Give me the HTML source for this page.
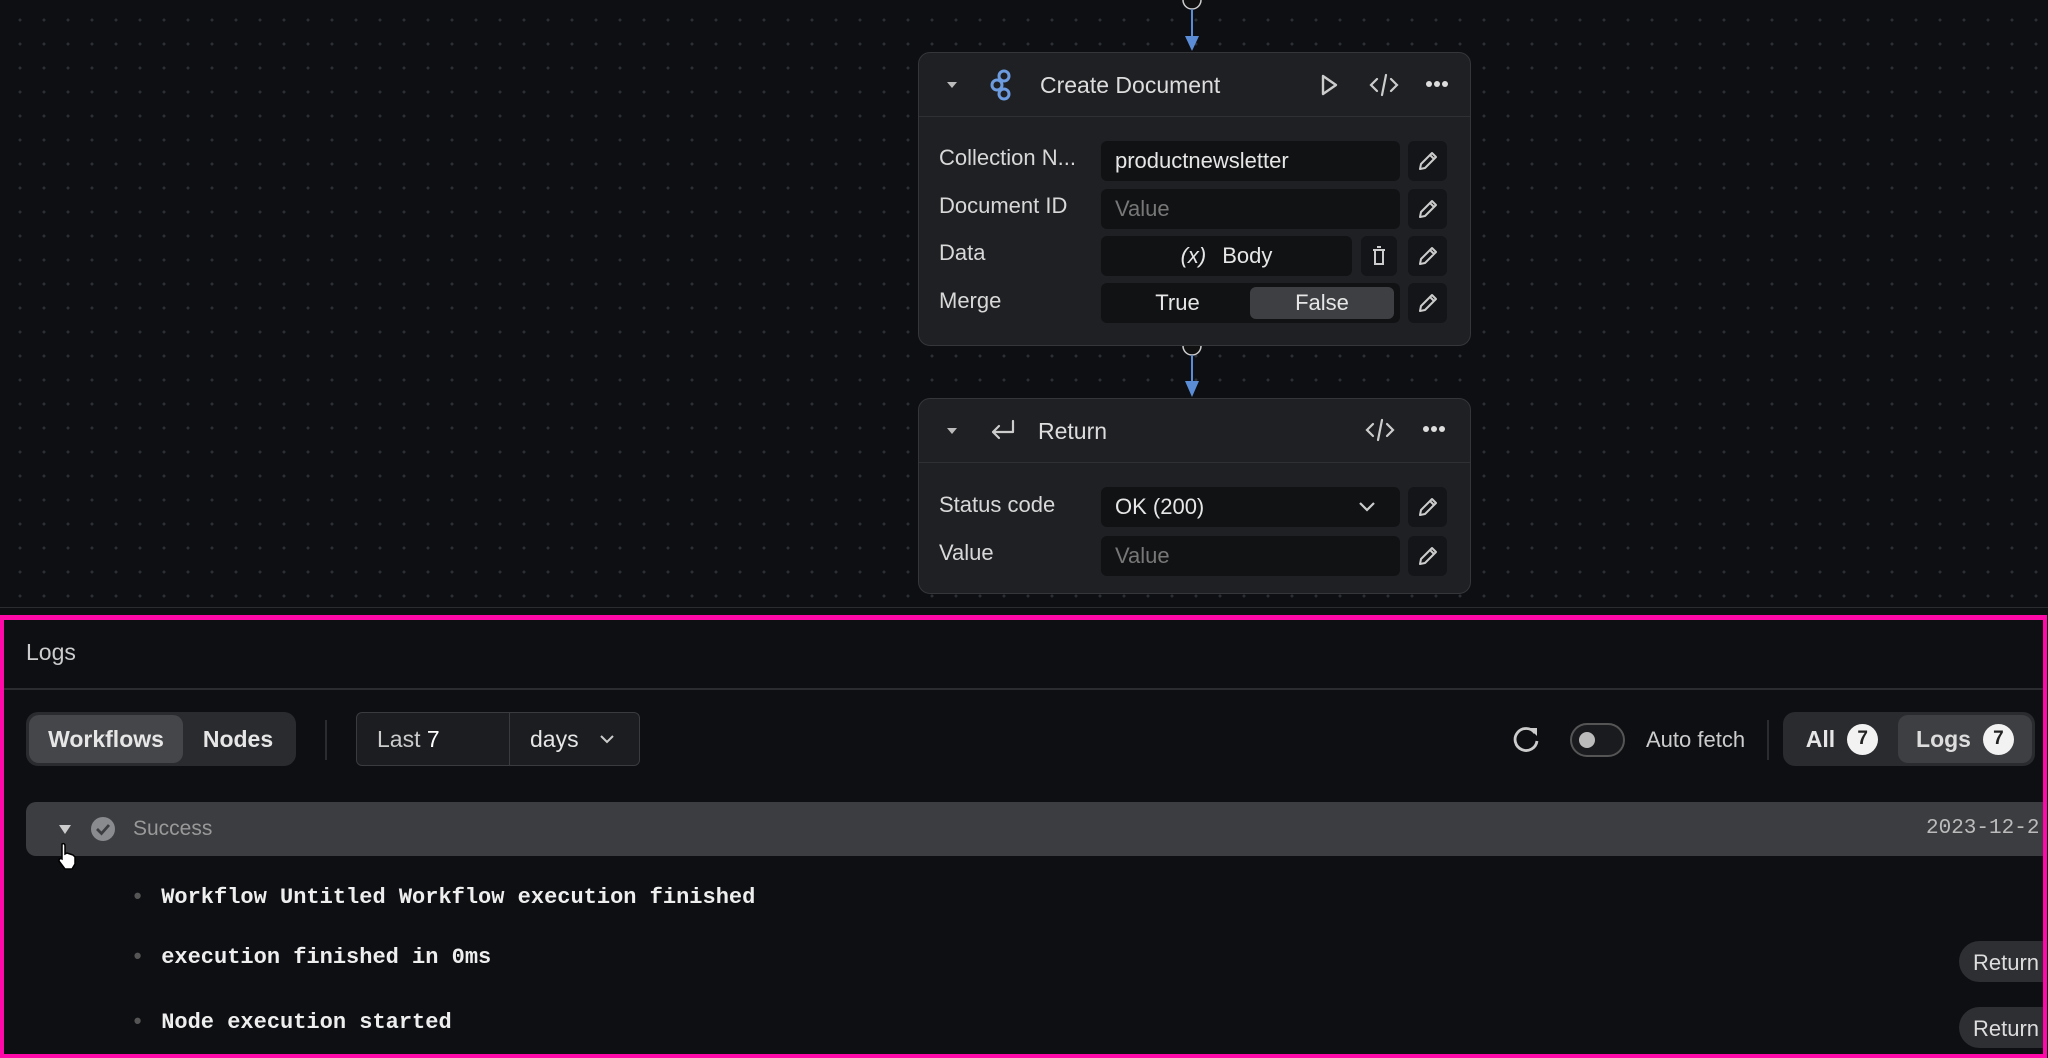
<!DOCTYPE html>
<html><head><meta charset="utf-8"><style>
*{box-sizing:border-box;margin:0;padding:0}
body{width:2048px;height:1058px;overflow:hidden;background:#0d0f13;font-family:"Liberation Sans",sans-serif;color:#e6e6e6;position:relative}
.grid{position:absolute;left:0;top:0;width:2048px;height:608px;background-image:radial-gradient(circle,#2c2f35 1.3px,transparent 1.6px);background-size:24px 24px;background-position:8px 8px}
.abs{position:absolute}
.card{position:absolute;left:918px;width:553px;background:#1f2023;border:1.5px solid #34363a;border-radius:12px}
.hdr{position:absolute;left:0;right:0;top:0;border-bottom:1.5px solid #2e3034}
.lbl{position:absolute;left:20px;font-size:22px;color:#d8d8d8}
.inp{position:absolute;left:182px;width:299px;background:#111214;border-radius:6px;font-size:22px;display:flex;align-items:center;padding-left:14px}
.ed{position:absolute;left:489px;width:39px;height:40px;background:#141518;border-radius:6px;display:flex;align-items:center;justify-content:center}
.mono{font-family:"Liberation Mono",monospace}
.pill{position:absolute;background:#2a2b2f;border-radius:12px}
.badge{display:inline-flex;width:31px;height:31px;border-radius:50%;background:#f2f2f2;color:#222;align-items:center;justify-content:center;font-size:19px;margin-left:12px}
</style></head><body>
<div class="grid"></div>
<svg class="abs" style="left:1176px;top:0" width="32" height="400">
<circle cx="16" cy="0" r="9" fill="#111" stroke="#ccc" stroke-width="1.5"/>
<line x1="16" y1="9" x2="16" y2="40" stroke="#5b8dd6" stroke-width="2"/>
<path d="M9 36 L23 36 L16 51 Z" fill="#5b8dd6"/>
<circle cx="16" cy="346" r="9" fill="#111" stroke="#ccc" stroke-width="1.5"/>
<line x1="16" y1="355" x2="16" y2="384" stroke="#5b8dd6" stroke-width="2"/>
<path d="M9 381 L23 381 L16 397 Z" fill="#5b8dd6"/>
</svg>
<!-- card 1 -->
<div class="card" style="top:52px;height:294px">
 <div class="hdr" style="height:64px"></div>
 <svg class="abs" style="left:26px;top:27px" width="14" height="10"><path d="M2 2 L12 2 L7 8Z" fill="#bbb"/></svg>
 <svg class="abs" style="left:70px;top:16px" width="26" height="32" fill="none" stroke="#6d9be0" stroke-width="3"><circle cx="15" cy="7" r="5"/><circle cx="8" cy="16" r="5"/><circle cx="15" cy="25" r="5"/></svg>
 <div class="abs" style="left:121px;top:19px;font-size:23px;color:#ddd">Create Document</div>
 <svg class="abs" style="left:400px;top:20px" width="20" height="24"><path d="M4 3 L17 12 L4 21Z" fill="none" stroke="#ccc" stroke-width="2.4" stroke-linejoin="round"/></svg>
 <svg class="abs" style="left:450px;top:18px" width="30" height="28" fill="none" stroke="#ccc" stroke-width="2.2" stroke-linecap="round"><path d="M8 8 L2 14 L8 20 M22 8 L28 14 L22 20 M17 4 L13 24"/></svg>
 <svg class="abs" style="left:506px;top:25px" width="26" height="12" fill="#ddd"><circle cx="4" cy="6" r="3"/><circle cx="12" cy="6" r="3"/><circle cx="20" cy="6" r="3"/></svg>
 <div class="lbl" style="top:92px">Collection N...</div>
 <div class="lbl" style="top:140px">Document ID</div>
 <div class="lbl" style="top:187px">Data</div>
 <div class="lbl" style="top:235px">Merge</div>
 <div class="inp" style="top:88px;height:40px">productnewsletter</div>
 <div class="inp" style="top:136px;height:40px;color:#777">Value</div>
 <div class="inp" style="top:183px;width:251px;height:40px;justify-content:center;padding:0"><i style="margin-right:16px">(x)</i>Body</div>
 <div class="ed" style="left:442px;top:183px;width:36px"><svg width="16" height="20" fill="none" stroke="#ccc" stroke-width="2"><path d="M2 4 H14 M4 4 V18 H12 V4 M6 1 H10"/></svg></div>
 <div class="inp" style="top:230px;height:40px;padding:4px">
  <div style="width:145px;text-align:center">True</div>
  <div style="width:144px;height:32px;background:#3e3f43;border-radius:6px;display:flex;align-items:center;justify-content:center">False</div>
 </div>
 <div class="ed pen" style="top:88px"></div>
 <div class="ed pen" style="top:136px"></div>
 <div class="ed pen" style="top:183px"></div>
 <div class="ed pen" style="top:230px"></div>
</div>
<!-- card 2 -->
<div class="card" style="top:398px;height:196px">
 <div class="hdr" style="height:64px"></div>
 <svg class="abs" style="left:26px;top:27px" width="14" height="10"><path d="M2 2 L12 2 L7 8Z" fill="#bbb"/></svg>
 <svg class="abs" style="left:70px;top:19px" width="28" height="24" fill="none" stroke="#ccc" stroke-width="2.2" stroke-linecap="round" stroke-linejoin="round"><path d="M24 3 V14 H4 M10 8 L4 14 L10 20"/></svg>
 <div class="abs" style="left:119px;top:19px;font-size:23px;color:#ddd">Return</div>
 <svg class="abs" style="left:446px;top:17px" width="30" height="28" fill="none" stroke="#ccc" stroke-width="2.2" stroke-linecap="round"><path d="M8 8 L2 14 L8 20 M22 8 L28 14 L22 20 M17 4 L13 24"/></svg>
 <svg class="abs" style="left:503px;top:24px" width="26" height="12" fill="#ddd"><circle cx="4" cy="6" r="3"/><circle cx="12" cy="6" r="3"/><circle cx="20" cy="6" r="3"/></svg>
 <div class="lbl" style="top:93px">Status code</div>
 <div class="lbl" style="top:141px">Value</div>
 <div class="inp" style="top:88px;height:40px">OK (200)<svg style="position:absolute;right:24px;top:14px" width="18" height="12" fill="none" stroke="#ccc" stroke-width="2.2"><path d="M2 2 L9 9 L16 2"/></svg></div>
 <div class="inp" style="top:137px;height:40px;color:#777">Value</div>
 <div class="ed pen" style="top:88px"></div>
 <div class="ed pen" style="top:137px"></div>
</div>
<div class="abs" style="left:0;top:607px;width:2048px;height:1px;background:#2a2c30"></div>
<!-- logs panel -->
<div class="abs" style="left:0;top:615px;width:2047px;height:443px;border:4px solid #ff0aa8;border-top-width:5px;background:#0d0f13;overflow:hidden">
 <div class="abs" style="left:22px;top:19px;font-size:23px;color:#ccc">Logs</div>
 <div class="abs" style="left:0;top:68px;width:2048px;height:1.5px;background:#2a2c30"></div>
 <div class="pill" style="left:22px;top:92px;width:270px;height:54px;display:flex;align-items:center;padding:3px;font-size:23px;font-weight:bold">
  <div style="width:154px;height:48px;background:#45464a;border-radius:10px;display:flex;align-items:center;justify-content:center">Workflows</div>
  <div style="flex:1;text-align:center">Nodes</div>
 </div>
 <div class="abs" style="left:321px;top:100px;width:1.5px;height:40px;background:#2a2c30"></div>
 <div class="abs" style="left:352px;top:92px;width:284px;height:54px;background:#1c1d20;border:1.5px solid #3a3b3f;border-radius:6px;display:flex;align-items:center;font-size:23px">
  <div style="width:153px;height:100%;border-right:1.5px solid #3a3b3f;padding-left:20px;display:flex;align-items:center;color:#ccc">Last&nbsp;<span style="color:#fff">7</span></div>
  <div style="padding-left:20px">days</div>
  <svg style="margin-left:20px" width="16" height="10" fill="none" stroke="#ccc" stroke-width="2"><path d="M2 2 L8 8 L14 2"/></svg>
 </div>
 <svg class="abs" style="left:1508px;top:104px" width="30" height="30" fill="none" stroke="#ccc" stroke-width="2.8"><path d="M23 9 A11 11 0 1 0 25 17"/><path d="M17 4 L25 4 L25 12 Z" fill="#ccc" stroke="none"/></svg>
 <div class="abs" style="left:1566px;top:103px;width:55px;height:34px;border:2px solid #555;border-radius:17px;background:#1a1b1e"><div style="position:absolute;left:7px;top:7px;width:16px;height:16px;border-radius:50%;background:#bbb"></div></div>
 <div class="abs" style="left:1642px;top:107px;font-size:22px;color:#ccc">Auto fetch</div>
 <div class="abs" style="left:1763px;top:100px;width:1.5px;height:40px;background:#2a2c30"></div>
 <div class="pill" style="left:1779px;top:92px;width:252px;height:54px;display:flex;align-items:center;font-size:23px;font-weight:bold;padding:3px">
  <div style="width:112px;display:flex;align-items:center;justify-content:center">All<span class="badge">7</span></div>
  <div style="width:134px;height:48px;background:#3e3f43;border-radius:10px;display:flex;align-items:center;justify-content:center;color:#ddd">Logs<span class="badge">7</span></div>
 </div>
 <div class="abs" style="left:22px;top:182px;width:2030px;height:54px;background:#3c3d40;border-radius:10px 0 0 10px">
  <svg class="abs" style="left:32px;top:22px" width="14" height="12"><path d="M1 1 L13 1 L7 10Z" fill="#ccc"/></svg>
  <svg class="abs" style="left:64px;top:14px" width="26" height="26"><circle cx="13" cy="13" r="12" fill="#8a8b8e"/><path d="M7 13 L11.5 17.5 L19 9" fill="none" stroke="#3c3d40" stroke-width="2.8"/></svg>
  <div class="abs" style="left:107px;top:15px;font-size:21px;color:#999">Success</div>
  <div class="abs mono" style="left:1900px;top:15px;font-size:21px;color:#bbb;white-space:nowrap">2023-12-2</div>
 </div>
 <svg class="abs" style="left:50px;top:222px" width="26" height="30"><path d="M8 2 C10 1 11 2 11 4 V12 L13 11 L16 12 L19 13 L21 15 V22 L18 27 H11 L5 19 C5 17 6 16 8 17 V4Z" fill="#fff" stroke="#000" stroke-width="1.5"/></svg>
 <div class="abs mono" style="left:127px;top:265px;font-size:22px;font-weight:bold;color:#eee;white-space:nowrap"><span style="color:#555;margin-right:17px">•</span>Workflow Untitled Workflow execution finished</div>
 <div class="abs mono" style="left:127px;top:325px;font-size:22px;font-weight:bold;color:#eee;white-space:nowrap"><span style="color:#555;margin-right:17px">•</span>execution finished in 0ms</div>
 <div class="abs mono" style="left:127px;top:390px;font-size:22px;font-weight:bold;color:#eee;white-space:nowrap"><span style="color:#555;margin-right:17px">•</span>Node execution started</div>
 <div class="abs" style="left:1955px;top:321px;width:120px;height:41px;background:#2e2f33;border-radius:21px;font-size:22px;padding:9px 0 0 14px;color:#ddd">Return</div>
 <div class="abs" style="left:1955px;top:387px;width:120px;height:41px;background:#2e2f33;border-radius:21px;font-size:22px;padding:9px 0 0 14px;color:#ddd">Return</div>
</div>
<script>
document.querySelectorAll('.pen').forEach(e=>{e.innerHTML='<svg width="22" height="22" fill="none" stroke="#ccc" stroke-width="2" stroke-linejoin="round"><path d="M3 19 L4 14 L15 3 L19 7 L8 18 Z M13 5 L17 9"/></svg>';});
</script>
</body></html>
